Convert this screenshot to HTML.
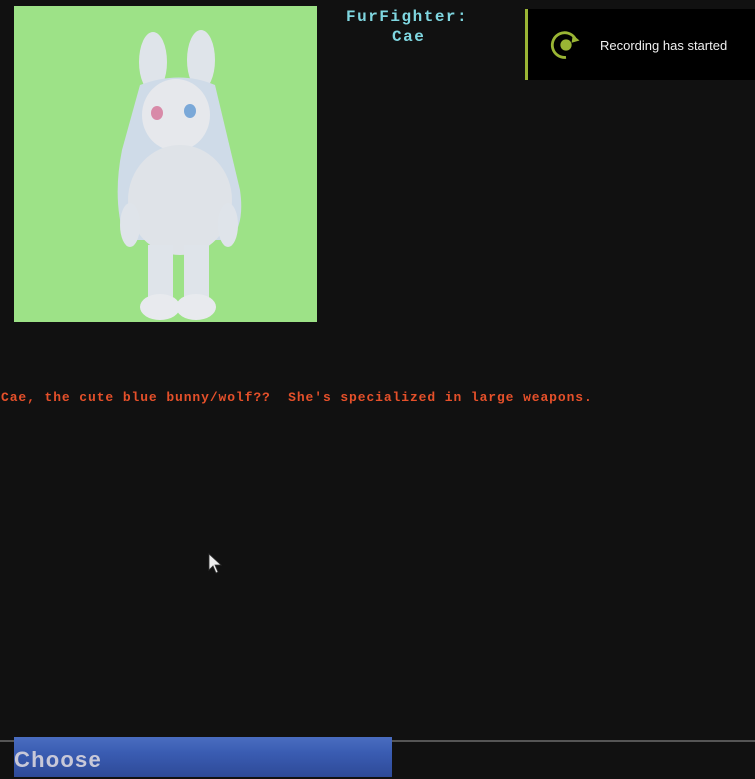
<!DOCTYPE html>
<html><head><style>
html,body{margin:0;padding:0;}
body{width:755px;height:779px;background:#111111;position:relative;overflow:hidden;font-family:"Liberation Mono",monospace;}
.t{position:absolute;color:#7fd6e0;font-weight:bold;font-size:16px;letter-spacing:1.5px;}
.desc{position:absolute;left:1px;top:390px;color:#e5502a;font-size:13px;font-weight:bold;white-space:pre;letter-spacing:0.9px;}
.toast{position:absolute;left:525px;top:9px;width:230px;height:71px;background:#000;border-left:3px solid #9ab534;box-sizing:border-box;}
.toast span{position:absolute;left:72px;top:29px;color:#f0f0f0;font-family:"Liberation Sans",sans-serif;font-size:13px;}
.line{position:absolute;left:0;top:740px;width:755px;height:2px;background:#555;}
.btn{position:absolute;left:14px;top:737px;width:378px;height:40px;background:linear-gradient(#4a6dc0,#3a5cb2 40%,#2e4a98);}
.btn span{position:absolute;left:0;top:10px;color:#c8c8d8;font-family:"Liberation Sans",sans-serif;font-weight:bold;font-size:22px;letter-spacing:1.2px;}
</style></head><body>
<svg style="position:absolute;left:0;top:0" width="755" height="779">
<rect x="14" y="6" width="303" height="316" fill="#9de287"/>
<g fill="#dfe4ea">
<ellipse cx="153" cy="62" rx="14" ry="30"/>
<ellipse cx="201" cy="60" rx="14" ry="30"/>
<path d="M140 85 Q180 70 215 85 L240 190 Q245 225 230 240 L125 240 Q112 200 122 150 Z" fill="#cfdbe8"/>
<ellipse cx="176" cy="115" rx="34" ry="36" fill="#e6e8ec"/>
<ellipse cx="180" cy="200" rx="52" ry="55" fill="#dfe3e8"/>
<ellipse cx="130" cy="225" rx="10" ry="22"/>
<ellipse cx="228" cy="225" rx="10" ry="22"/>
<rect x="148" y="245" width="25" height="55"/>
<rect x="184" y="245" width="25" height="55"/>
<ellipse cx="160" cy="307" rx="20" ry="13" fill="#e8eaee"/>
<ellipse cx="196" cy="307" rx="20" ry="13" fill="#e8eaee"/>
</g>
<ellipse cx="157" cy="113" rx="6" ry="7" fill="#d88aa8"/>
<ellipse cx="190" cy="111" rx="6" ry="7" fill="#7aa8d8"/>
</svg>
<div class="t" style="left:346px;top:8px">FurFighter:</div>
<div class="t" style="left:392px;top:28px">Cae</div>
<div class="desc">Cae, the cute blue bunny/wolf??  She's specialized in large weapons.</div>
<div class="toast">
<svg style="position:absolute;left:20px;top:18px" width="36" height="36" viewBox="0 0 32 32">
<path d="M24 10 A11 11 0 1 0 16 27" fill="none" stroke="#9ab534" stroke-width="2.5"/>
<path d="M22 7 L28 12 L21 14 Z" fill="#9ab534"/>
<circle cx="16" cy="16" r="5" fill="#9ab534"/>
</svg>
<span>Recording has started</span></div>
<svg style="position:absolute;left:208px;top:553px" width="16" height="22"><path d="M1 1 L1 17 L5 13 L8 20 L10 19 L7 12 L13 12 Z" fill="#eee" stroke="#333" stroke-width="0.8"/></svg>
<div class="line"></div>
<div class="btn"><span>Choose</span></div>
</body></html>
